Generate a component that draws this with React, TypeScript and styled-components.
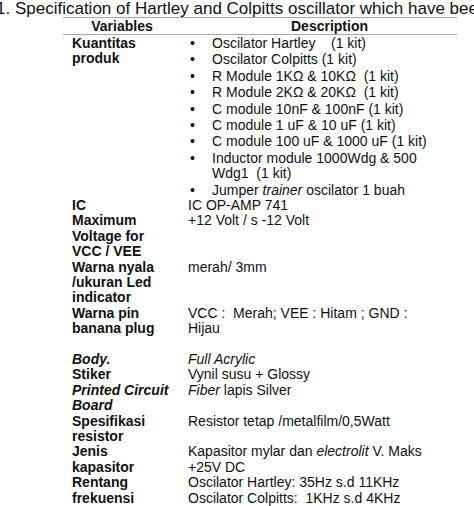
import React from 'react';
import styled, { createGlobalStyle } from 'styled-components';

const GlobalStyle = createGlobalStyle`
    html, body {
        margin: 0;
        padding: 0;
        background: #fff;
        overflow: hidden;
    }
    body {
        font-family: "Liberation Sans", Arial, sans-serif;
        color: #111;
    }
`

type Spec = {
    label: React.ReactNode
    value: React.ReactNode
}

const kitItems: React.ReactNode[] = [
    'Oscilator Hartley    (1 kit)',
    'Oscilator Colpitts (1 kit)',
    'R Module 1KΩ & 10KΩ  (1 kit)',
    'R Module 2KΩ & 20KΩ  (1 kit)',
    'C module 10nF & 100nF (1 kit)',
    'C module 1 uF & 10 uF (1 kit)',
    'C module 100 uF & 1000 uF (1 kit)',
    <>Inductor module 1000Wdg &amp; 500<br />Wdg1  (1 kit)</>,
    <>Jumper <i>trainer</i> oscilator 1 buah</>,
]

const specs: Spec[] = [
    { label: 'IC', value: 'IC OP-AMP 741' },
    { label: <>Maximum<br />Voltage for<br />VCC / VEE</>, value: '+12 Volt / s -12 Volt' },
    { label: <>Warna nyala<br />/ukuran Led<br />indicator</>, value: 'merah/ 3mm' },
    { label: <>Warna pin<br />banana plug</>, value: <>VCC :  Merah; VEE : Hitam ; GND :<br />Hijau</> },
    { label: '\u00a0', value: '' },
    { label: <i>Body.</i>, value: <i>Full Acrylic</i> },
    { label: 'Stiker', value: 'Vynil susu + Glossy' },
    { label: <i>Printed Circuit<br />Board</i>, value: <><i>Fiber</i> lapis Silver</> },
    { label: <>Spesifikasi<br />resistor</>, value: 'Resistor tetap /metalfilm/0,5Watt' },
    { label: <>Jenis<br />kapasitor</>, value: <>Kapasitor mylar dan <i>electrolit</i> V. Maks<br />+25V DC</> },
    { label: <>Rentang<br />frekuensi</>, value: <>Oscilator Hartley: 35Hz s.d 11KHz<br />Oscilator Colpitts:  1KHz s.d 4KHz</> },
]

const App = (): JSX.Element => {
    return (
        <Page>
            <GlobalStyle />
            <Caption>1. Specification of Hartley and Colpitts oscillator which have been developed</Caption>
            <Table>
                <HeadRow>
                    <HeadCell $shift={-7}>Variables</HeadCell>
                    <HeadCell $shift={14}>Description</HeadCell>
                </HeadRow>
                <Row $top={1}>
                    <Label>Kuantitas<br />produk</Label>
                    <BulletList>
                        {kitItems.map((item, i) => (
                            <Item key={i}>
                                <Dot>•</Dot>
                                <ItemText>{item}</ItemText>
                            </Item>
                        ))}
                    </BulletList>
                </Row>
                {specs.map((s, i) => (
                    <Row key={i}>
                        <Label>{s.label}</Label>
                        <Value>{s.value}</Value>
                    </Row>
                ))}
            </Table>
        </Page>
    )
}

export default App

const Page = styled.div`
    width: 474px;
    height: 506px;
    overflow: hidden;
`
const Caption = styled.div`
    font-size: 17px;
    line-height: 17px;
    height: 17px;
    white-space: nowrap;
    margin-left: -4px;
`
const Table = styled.div`
    margin-left: 63px;
    width: 394px;
    font-size: 14px;
    line-height: 15.4px;
`
const HeadRow = styled.div`
    display: grid;
    grid-template-columns: 125px 1fr;
    border-top: 1px solid #a8a8a8;
    border-bottom: 1px solid #a8a8a8;
    padding-top: 0.5px;
    font-weight: bold;
`
const HeadCell = styled.div<{ $shift: number }>`
    text-align: center;
    padding-left: ${p => (p.$shift > 0 ? p.$shift : 0)}px;
    padding-right: ${p => (p.$shift < 0 ? -p.$shift : 0)}px;
`
const Row = styled.div<{ $top?: number }>`
    display: grid;
    grid-template-columns: 125px 1fr;
    padding-top: ${p => p.$top ?? 0}px;
`
const Label = styled.div`
    padding-left: 9px;
    font-weight: bold;
    white-space: nowrap;
`
const Value = styled.div`
    white-space: pre;
`
const BulletList = styled.div`
    display: flex;
    flex-direction: column;
    gap: 1px;
`
const Item = styled.div`
    display: flex;
`
const Dot = styled.span`
    width: 24px;
    flex: none;
    padding-left: 2px;
    box-sizing: border-box;
`
const ItemText = styled.span`
    white-space: pre;
`
